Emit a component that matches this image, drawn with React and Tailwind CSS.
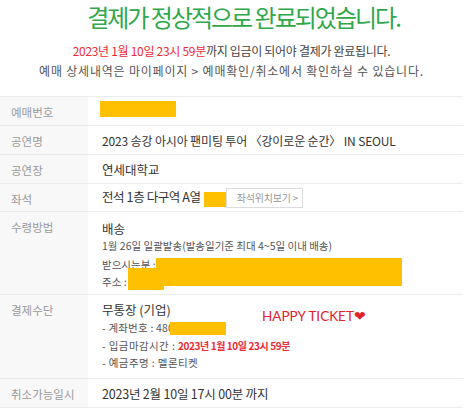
import React from 'react';

const KR = "font-['Noto_Sans_CJK_KR','Noto_Sans',sans-serif]";

function Row({ label, height, children, relative }) {
  return (
    <div className={`flex border-t border-[#ececec] ${height}`}>
      <div className="w-[88px] shrink-0 bg-[#f8f8f8] pl-[11px] text-[11.5px] leading-[30px] text-[#9a9a9a]">
        {label}
      </div>
      <div className={`flex-1 pl-[14px] ${relative ? 'relative' : ''}`}>{children}</div>
    </div>
  );
}

function Redact({ className }) {
  return <span className={`absolute bg-[#ffc000] ${className}`} />;
}

export default function App() {
  return (
    <div className={`w-[474px] h-[412px] overflow-hidden bg-white ${KR}`}>
      <div className="w-[463px]">
        {/* Header */}
        <div className="text-center">
          <h1 className="h-[34px] pl-[24px] text-[24px] leading-[34px] tracking-[-2px] text-[#2fa84a] whitespace-nowrap">
            결제가 정상적으로 완료되었습니다.
          </h1>
          <p className="mt-[7px] text-[12px] leading-[20px] tracking-[-0.3px] text-[#444]">
            <span className="text-[#ee2a33]">2023년 1월 10일 23시 59분</span>까지 입금이 되어야 결제가 완료됩니다.
          </p>
          <p className="text-[12px] leading-[20px] tracking-[0.8px] text-[#555]">
            예매 상세내역은 마이페이지 &gt; 예매확인/취소에서 확인하실 수 있습니다.
          </p>
        </div>

        {/* Table */}
        <div className="mt-[15px] border-b border-[#ececec]">
          <Row label="예매번호" height="h-[29px]" relative>
            <Redact className="left-[12px] top-[4px] w-[76px] h-[16px]" />
          </Row>
          <Row label="공연명" height="h-[29px]">
            <div className="text-[12px] leading-[29px] tracking-[-0.15px] text-[#333]">
              2023 송강 아시아 팬미팅 투어 〈강이로운 순간〉 IN SEOUL
            </div>
          </Row>
          <Row label="공연장" height="h-[29px]">
            <div className="text-[12.5px] leading-[29px] text-[#333]">연세대학교</div>
          </Row>
          <Row label="좌석" height="h-[28px]">
            <div className="flex items-center h-full whitespace-nowrap">
              <span className="text-[12.5px] tracking-[-0.4px] text-[#333]">전석 1층 다구역 A열</span>
              <span className="ml-[3px] w-[22px] h-[15px] mt-[4px] bg-[#ffc000]" />
              <span className="w-[77px] h-[20px] border border-[#dcdcdc] bg-white text-[10px] leading-[18px] tracking-[-0.2px] text-[#999] pl-[10px]">
                좌석위치보기 &gt;
              </span>
            </div>
          </Row>
          <Row label="수령방법" height="h-[83px]" relative>
            <div className="pt-[8px] text-[12.5px] leading-[18px] text-[#333]">배송</div>
            <div className="text-[10.5px] leading-[16px] text-[#555]">1월 26일 일괄발송(발송일기준 최대 4~5일 이내 배송)</div>
            <div className="mt-[2px] text-[10.5px] leading-[17px] text-[#555]">받으시는분 :</div>
            <div className="text-[10.5px] leading-[17px] text-[#555]">주소 :</div>
            <Redact className="left-[68px] top-[46px] w-[246px] h-[28px]" />
            <Redact className="left-[40px] top-[56px] w-[36px] h-[22px]" />
          </Row>
          <Row label="결제수단" height="h-[84px]" relative>
            <div className="pt-[6px] text-[12.5px] leading-[18px] text-[#333]">무통장 (기업)</div>
            <div className="text-[10.5px] leading-[18px] tracking-[0.2px] text-[#555]">- 계좌번호 : 480</div>
            <div className="text-[10.5px] leading-[17px] tracking-[0.4px] text-[#555]">
              - 입금마감시간 : <span className="font-bold text-[10px] tracking-[-0.4px] text-[#ee2a33]">2023년 1월 10일 23시 59분</span>
            </div>
            <div className="text-[10.5px] leading-[17px] tracking-[0.4px] text-[#555]">- 예금주명 : 멜론티켓</div>
            <Redact className="left-[82px] top-[27px] w-[56px] h-[13px]" />
            <span className="absolute left-[174px] top-[12px] text-[13.5px] leading-[18px] text-[#e0242c] font-['Lato',sans-serif]">
              HAPPY TICKET❤
            </span>
          </Row>
          <Row label="취소가능일시" height="h-[29px]">
            <div className="text-[12.5px] leading-[29px] tracking-[-0.2px] text-[#333]">2023년 2월 10일 17시 00분 까지</div>
          </Row>
        </div>
      </div>
    </div>
  );
}
